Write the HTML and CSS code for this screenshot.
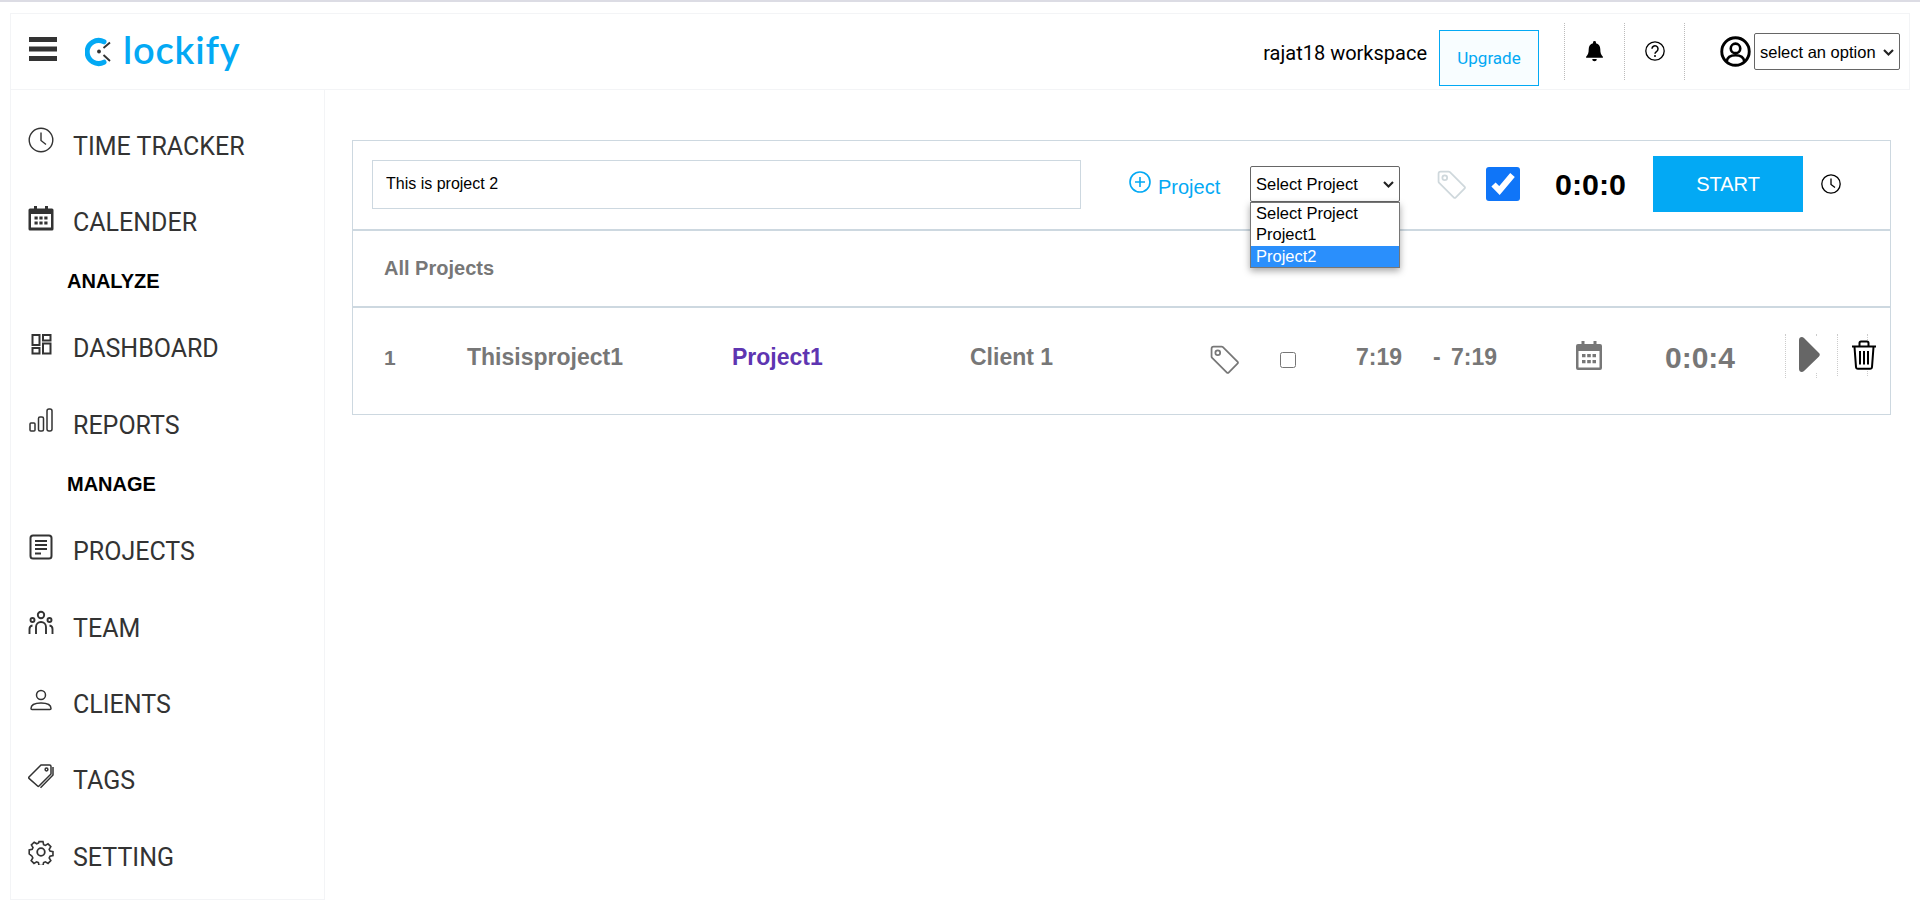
FILE: index.html
```html
<!DOCTYPE html>
<html lang="en">
<head>
<meta charset="utf-8">
<title>Clockify</title>
<link rel="stylesheet" href="styles.css">
</head>
<body>
<div class="page">
  <header class="topbar">
    <svg class="burger" viewBox="0 0 28 24"><rect width="28" height="5" y="0"/><rect width="28" height="5" y="9.500"/><rect width="28" height="5" y="19"/></svg>
    <div class="logo">
      <svg class="logo-mark" viewBox="0 0 30 30"><path d="M19 4.800A11.500 11.500 0 1 0 19 25.200" fill="none" stroke="#03a9f4" stroke-width="5" stroke-linecap="round"/><circle cx="14" cy="14.500" r="1.900" fill="#333"/><path d="M18.500 11L25 5.500M18.500 18L25 24" stroke="#333" stroke-width="1.900" fill="none"/></svg>
      <span class="logo-text">lockify</span>
    </div>
    <div class="top-right">
      <span class="workspace">rajat18 workspace</span>
      <button class="upgrade">Upgrade</button>
      <span class="top-cell">
        <svg class="ic-bell" viewBox="0 0 16 20"><path d="M8 0a1.400 1.400 0 0 1 1.400 1.400v.7C12 2.700 13.500 5 13.500 7.500c0 4 .8 5.500 2.500 7.500v1H0v-1c1.700-2 2.500-3.500 2.500-7.500C2.500 5 4 2.700 6.600 2.100v-.7A1.400 1.400 0 0 1 8 0zM5.800 17.200h4.400a2.200 2.200 0 0 1-4.400 0z"/></svg>
      </span>
      <span class="top-cell">
        <svg class="ic-help" viewBox="0 0 20 20"><circle cx="10" cy="10" r="9.200" fill="none" stroke="#000" stroke-width="1.300"/><path d="M7 7.800a3 3 0 1 1 4.700 2.500c-1.100.7-1.700 1.200-1.700 2.500" fill="none" stroke="#000" stroke-width="1.500"/><circle cx="10" cy="15" r="1"/></svg>
      </span>
      <span class="top-cell top-cell-user">
        <svg class="ic-user" viewBox="0 0 30 30"><circle cx="15" cy="15" r="13.300" fill="none" stroke="#000" stroke-width="2.800"/><circle cx="15" cy="12" r="4.600" fill="none" stroke="#000" stroke-width="2.500"/><path d="M6.500 24.500c.6-4 3.500-5.800 8.500-5.800s7.900 1.800 8.500 5.800" fill="none" stroke="#000" stroke-width="2.500"/></svg>
      </span>
      <div class="select-wrap select-wrap-user">
        <select class="native-select"><option>select an option</option></select>
        <svg class="chevron" viewBox="0 0 11 7"><path d="M1 1l4.500 4.500L10 1"/></svg>
      </div>
    </div>
  </header>

  <div class="body-row">
    <nav class="sidebar">
      <a class="nav-item">
        <svg class="nav-ic nav-ic-clock" viewBox="0 0 26 26"><circle cx="13" cy="13" r="11.800"/><path d="M13 5.500V13.500L18 17.500"/></svg>
        <span>TIME TRACKER</span>
      </a>
      <a class="nav-item">
        <svg class="nav-ic nav-ic-solid" viewBox="0 0 26 26"><path d="M2 3.500h4V1h3v2.500h8V1h3v2.500h4a1.500 1.500 0 0 1 1.500 1.500v19a1.500 1.500 0 0 1-1.500 1.500H2A1.500 1.500 0 0 1 .5 24V5A1.500 1.500 0 0 1 2 3.500zM3 9v13.500h20V9z" fill-rule="evenodd"/><path d="M6.500 11.500h3.200v3H6.500zM11.400 11.500h3.200v3h-3.200zM16.300 11.500h3.200v3h-3.200zM6.500 16.500h3.200v3H6.500zM11.400 16.500h3.200v3h-3.200zM16.300 16.500h3.200v3h-3.200z"/></svg>
        <span>CALENDER</span>
      </a>
      <div class="nav-label">ANALYZE</div>
      <a class="nav-item">
        <svg class="nav-ic nav-ic-thick" viewBox="0 0 26 26"><rect x="4.500" y="4" width="7" height="10"/><rect x="15" y="4" width="7.500" height="5.500"/><rect x="4.500" y="17" width="7" height="5.500"/><rect x="15" y="12.500" width="7.500" height="10"/></svg>
        <span>DASHBOARD</span>
      </a>
      <a class="nav-item">
        <svg class="nav-ic nav-ic-mid" viewBox="0 0 26 26"><rect x="2" y="16" width="5" height="8" rx="1"/><rect x="10.500" y="10" width="5" height="14" rx="1.500"/><rect x="19" y="2" width="5" height="22" rx="2"/></svg>
        <span>REPORTS</span>
      </a>
      <div class="nav-label">MANAGE</div>
      <a class="nav-item">
        <svg class="nav-ic nav-ic-thick" viewBox="0 0 26 26"><rect x="2.500" y="1.500" width="21" height="23" rx="2.500"/><path d="M7 7h12M7 11h12M7 15h12M7 19.500h6" stroke-width="1.800"/></svg>
        <span>PROJECTS</span>
      </a>
      <a class="nav-item">
        <svg class="nav-ic nav-ic-team" viewBox="0 0 26 26"><circle cx="13" cy="5" r="3.200"/><circle cx="4.500" cy="10" r="2"/><circle cx="21.500" cy="10" r="2"/><path d="M8 24v-7a5 5 0 0 1 10 0v7M1.500 24v-5a3.500 3.500 0 0 1 3-3.500M24.500 24v-5a3.500 3.500 0 0 0-3-3.500"/></svg>
        <span>TEAM</span>
      </a>
      <a class="nav-item">
        <svg class="nav-ic nav-ic-mid" viewBox="0 0 26 26"><circle cx="13" cy="8" r="4.500"/><path d="M4 22.500h18a1 1 0 0 0 1-1c0-4-4-5.500-10-5.500s-10 1.500-10 5.500a1 1 0 0 0 1 1z"/></svg>
        <span>CLIENTS</span>
      </a>
      <a class="nav-item">
        <svg class="nav-ic nav-ic-mid" viewBox="0 0 26 26"><path d="M1 14L13 2h8.500a1.500 1.500 0 0 1 1.500 1.500V11L11 23a1 1 0 0 1-1.400 0L1 15.400a1 1 0 0 1 0-1.400z"/><circle cx="18.500" cy="6.500" r="1.400"/><path d="M25 4v8L12.500 24.800"/></svg>
        <span>TAGS</span>
      </a>
      <a class="nav-item">
        <svg class="nav-ic nav-ic-gear" viewBox="0 0 26 26"><circle cx="13" cy="13" r="3.800"/><path d="M10.800 1.500h4.400l.7 3.300 2 .9 2.900-1.800 3.100 3.100-1.800 2.900.9 2 3.300.7v4.400l-3.300.7-.9 2 1.800 2.900-3.100 3.100-2.900-1.800-2 .9-.7 3.300h-4.400l-.7-3.300-2-.9-2.900 1.800-3.100-3.100 1.800-2.900-.9-2L-.1 15.200v-4.400l3.300-.7.900-2-1.800-2.900 3.100-3.100 2.900 1.800 2-.9z" transform="translate(1.300 1.300) scale(.9)"/></svg>
        <span>SETTING</span>
      </a>
    </nav>

    <main class="content">
      <section class="tracker">
        <div class="entry-row">
          <input class="desc" type="text" value="This is project 2">
          <span class="add-project">
            <svg class="ic-plus" viewBox="0 0 22 22"><circle cx="11" cy="11" r="10"/><path d="M11 6v10M6 11h10"/></svg>
            <span>Project</span>
          </span>
          <div class="picker">
            <div class="select-wrap select-wrap-project">
              <select class="native-select"><option>Select Project</option></select>
              <svg class="chevron" viewBox="0 0 11 7"><path d="M1 1l4.500 4.500L10 1"/></svg>
            </div>
            <ul class="picker-list">
              <li>Select Project</li>
              <li>Project1</li>
              <li class="is-active">Project2</li>
            </ul>
          </div>
          <svg class="ic-tag ic-tag-light" viewBox="0 0 28 28"><path d="M1.500 3.500v7.500a2 2 0 0 0 .6 1.400l14 14a1.500 1.500 0 0 0 2.100 0l8.300-8.300a1.500 1.500 0 0 0 0-2.100L12.500 2.100a2 2 0 0 0-1.400-.6H3.500a2 2 0 0 0-2 2z"/><circle cx="7.500" cy="7.500" r="2.300"/></svg>
          <span class="checked">
            <svg viewBox="0 0 34 34"><path d="M7.500 17.500l6 6L26.500 8" fill="none" stroke="#fff" stroke-width="6"/></svg>
          </span>
          <span class="timer">0:0:0</span>
          <button class="start">START</button>
          <svg class="ic-clock" viewBox="0 0 20 20"><circle cx="10" cy="10" r="9.200"/><path d="M10 4.500V10.500L14 13.500"/></svg>
        </div>
        <div class="list-head">All Projects</div>
        <div class="list-row">
          <span class="c-num">1</span>
          <span class="c-name">Thisisproject1</span>
          <span class="c-project">Project1</span>
          <span class="c-client">Client 1</span>
          <svg class="ic-tag ic-tag-dark" viewBox="0 0 28 28"><path d="M1.500 3.500v7.500a2 2 0 0 0 .6 1.400l14 14a1.500 1.500 0 0 0 2.100 0l8.300-8.300a1.500 1.500 0 0 0 0-2.100L12.500 2.100a2 2 0 0 0-1.400-.6H3.500a2 2 0 0 0-2 2z"/><circle cx="7.500" cy="7.500" r="2.300"/></svg>
          <input class="row-check" type="checkbox">
          <span class="c-time">7:19</span>
          <span class="c-time c-time-end">- 7:19</span>
          <svg class="ic-cal" viewBox="0 0 26 30"><path d="M2 4h3.500V1h3v3h9V1h3v3H24a2 2 0 0 1 2 2v22a2 2 0 0 1-2 2H2a2 2 0 0 1-2-2V6a2 2 0 0 1 2-2zM2.500 11v16.500h21V11z" fill-rule="evenodd"/><path d="M6 14h3.500v3.200H6zM11.200 14h3.600v3.200h-3.600zM16.500 14H20v3.200h-3.500zM6 20h3.500v3.200H6zM11.200 20h3.600v3.200h-3.600zM16.500 20H20v3.200h-3.500z"/></svg>
          <span class="c-total">0:0:4</span>
          <span class="c-play">
            <svg viewBox="0 0 21 35"><path d="M0 3c0-2.800 3-4 5-2l15 15a2.500 2.500 0 0 1 0 3.400L5 34c-2 2-5 .8-5-2z"/></svg>
          </span>
          <span class="c-trash">
            <svg viewBox="0 0 26 30"><path d="M1 6.500h24M8.500 6V3a1.500 1.500 0 0 1 1.500-1.500h6A1.500 1.500 0 0 1 17.500 3v3M3.500 7l1.500 20a2 2 0 0 0 2 1.800h12a2 2 0 0 0 2-1.800l1.500-20M9 11v13.500M13 11v13.500M17 11v13.500" fill="none" stroke="#000" stroke-width="2"/></svg>
          </span>
        </div>
      </section>
    </main>
  </div>
</div>
</body>
</html>
```

FILE: styles.css
```css
* { box-sizing: border-box; }
html, body { margin: 0; padding: 0; height: 100%; background: #fff; overflow: hidden; }
body { font-family: "Liberation Sans", Arial, sans-serif; color: #000; }
.page { border-top: 2px solid #dcdce4; padding: 11px 10px 0; }

/* top bar */
.topbar { display: flex; align-items: center; height: 77px; border: 1px solid #f3f4f6; padding-left: 18px; width: 1900px; }
.burger { width: 28px; height: 24px; fill: #333; margin-bottom: 6px; }
.logo { display: flex; align-items: center; margin-left: 28px; }
.logo-mark { width: 30px; height: 30px; }
.logo-text { font-family: "Lato", sans-serif; font-weight: 600; font-size: 38px; letter-spacing: .8px; color: #03a9f4; line-height: 46px; margin: 0 0 5px 8px; }
.top-right { display: flex; align-items: center; margin-left: auto; padding-right: 9px; height: 100%; }
.workspace { font-family: Roboto, sans-serif; font-size: 20px; margin-top: 2px; }
.upgrade { width: 100px; height: 56px; margin-left: 12px; background: #f8fdff; border: 1px solid #03a9f4; color: #03a9f4; font-family: Roboto, sans-serif; font-size: 17px; padding: 0; margin-top: 13px; }
.top-cell { display: flex; align-items: center; justify-content: center; width: 60px; height: 57px; border-left: 1px dotted #bbb; margin-top: -1px; }
.upgrade + .top-cell { margin-left: 25px; }
.top-cell-user { justify-content: flex-start; padding-left: 35px; width: 70px; }
.ic-bell { width: 17px; height: 21px; }
.ic-help { width: 20px; height: 20px; }
.ic-user { width: 31px; height: 31px; }

.select-wrap { position: relative; }
.select-wrap-user { width: 146px; height: 37px; }
.select-wrap-project { width: 150px; height: 36px; }
.native-select { appearance: none; -webkit-appearance: none; display: block; width: 100%; height: 100%; padding: 0 0 0 5px; font-family: "Liberation Sans", Arial, sans-serif; font-size: 16.500px; background: #fff; border: 1px solid #666; border-radius: 2px; color: #000; }
.chevron { position: absolute; right: 6px; top: 50%; width: 11px; height: 7px; margin-top: -3px; fill: none; stroke: #222; stroke-width: 2.100; pointer-events: none; }

/* sidebar */
.body-row { display: flex; }
.sidebar { width: 315px; height: 810px; border: 1px solid #f3f4f6; border-top: 0; padding-top: 18px; flex: none; }
.nav-item { display: flex; align-items: center; height: 76.400px; font-family: Roboto, sans-serif; font-size: 25px; color: #333; padding-left: 17px; }
.nav-ic { width: 26px; height: 26px; flex: none; margin-right: 19px; margin-bottom: 10px; fill: none; stroke: #333; stroke-width: 1.400; }
.nav-ic-clock { margin-bottom: 12px; }
.nav-ic-mid { stroke-width: 1.500; }
.nav-ic-team { stroke-width: 1.900; }
.nav-ic-gear { stroke-width: 1.800; }
.nav-ic-thick { stroke-width: 2; }
.nav-ic-solid { fill: #333; stroke: none; }
.nav-label { height: 50px; line-height: 40px; padding-left: 56px; font-size: 20px; font-weight: 700; }

/* main */
.content { flex: 1; padding: 50px 0 0 27px; }
.tracker { width: 1539px; border: 1px solid #cdd8e0; }
.entry-row { display: flex; align-items: center; height: 90px; border-bottom: 2px solid #cdd8e0; padding: 0 0 2px 19px; }
.desc { width: 709px; height: 49px; border: 1px solid #cdd8e0; padding: 0 13px; font-family: "Liberation Sans", Arial, sans-serif; font-size: 16px; color: #000; outline: 0; }
.add-project { display: flex; align-items: center; margin-left: 48px; color: #03a9f4; font-size: 20px; width: 121px; }
.add-project span { margin-left: 7px; margin-top: 7px; }
.ic-plus { width: 22px; height: 22px; fill: none; stroke: #03a9f4; stroke-width: 1.600; margin-bottom: 4px; }
.picker { position: relative; width: 150px; height: 36px; }
.picker-list { position: absolute; left: 0; top: 36px; width: 150px; margin: 0; padding: 0; list-style: none; background: #fff; border: 1px solid #767676; box-shadow: 0 3px 7px rgba(0,0,0,.35); font-size: 16.500px; z-index: 2; }
.picker-list li { height: 21.400px; line-height: 21.400px; padding-left: 5px; }
.picker-list .is-active { background: #2a8ffc; color: #fff; }
.ic-tag { flex: none; fill: none; stroke-width: 1.700; }
.ic-tag-light { width: 29px; height: 29px; stroke: #cfd8dc; margin-left: 37px; }
.checked { display: flex; width: 34px; height: 34px; margin-left: 20px; background: #0f75f8; border-radius: 3px; }
.checked svg { width: 34px; height: 34px; }
.timer { width: 98px; margin-left: 35px; font-size: 30.400px; font-weight: 700; }
.start { width: 150px; height: 56px; background: #03a9f4; border: 0; color: #fff; font-family: "Liberation Sans", Arial, sans-serif; font-size: 20px; padding: 0; }
.ic-clock { width: 20px; height: 20px; margin-left: 18px; fill: none; stroke: #000; stroke-width: 1.300; }

.list-head { height: 77px; line-height: 75px; border-bottom: 2px solid #cdd8e0; padding-left: 31px; font-size: 20px; font-weight: 700; color: #777; }

.list-row { display: flex; align-items: center; height: 106px; padding-bottom: 7px; color: #777; font-weight: 700; font-size: 23px; }
.c-num { width: 83px; margin-left: 31px; font-size: 21px; }
.c-name { width: 265px; }
.c-project { width: 238px; color: #5e35b1; }
.c-client { width: 240px; }
.ic-tag-dark { width: 29px; height: 29px; stroke: #777; margin-top: 3px; }
.row-check { width: 16px; height: 16px; margin: 4px 0 0 41px; flex: none; }
.c-time { width: 77px; margin-left: 60px; }
.c-time-end { margin-left: 0; width: 143px; word-spacing: 4px; }
.ic-cal { width: 26px; height: 30px; fill: #777; flex: none; margin-bottom: 5px; margin-right: 63px; }
.c-total { width: 120px; font-size: 30px; color: #777; }
.c-play { position: relative; display: flex; align-items: center; width: 52px; height: 44px; border-left: 1px dotted #ccc; padding-left: 13px; margin-bottom: 3px; }
.c-play::before { content: ""; position: absolute; left: 30px; top: 0; height: 44px; border-left: 1px dotted #ccc; }
.c-play svg { position: relative; width: 21px; height: 35px; fill: #666; background: #fff; margin-bottom: 3px; }
.c-trash { position: relative; display: flex; align-items: center; height: 42px; border-left: 1px dotted #ccc; padding-left: 13px; margin-bottom: 5px; }
.c-trash::before { content: ""; position: absolute; left: 29px; top: 0; height: 42px; border-left: 1px dotted #ccc; }
.c-trash svg { position: relative; width: 26px; height: 30px; background: #fff; }
```
